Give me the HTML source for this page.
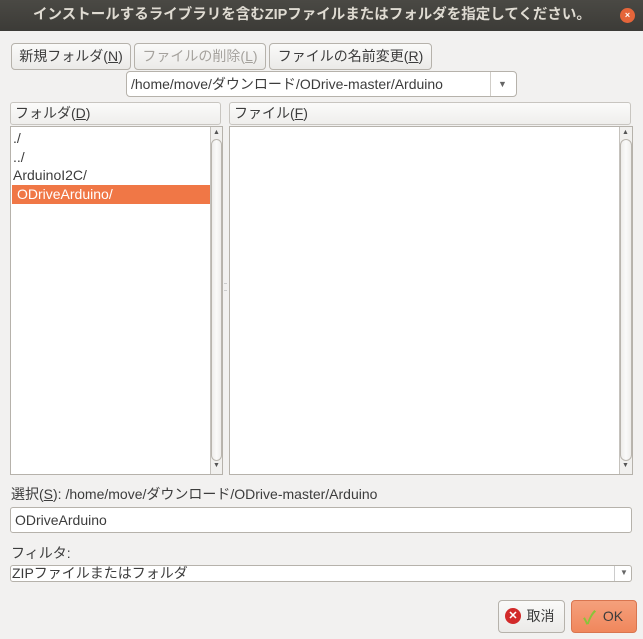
<!DOCTYPE html>
<html><head><meta charset="utf-8"><style>
*{box-sizing:border-box;margin:0;padding:0}
body{width:643px;height:639px;background:#f2f1f0;font-family:"Liberation Sans","Noto Sans CJK JP",sans-serif;font-size:14px;color:#3c3c3c;position:relative;overflow:hidden}
.a{position:absolute}
.title{left:0;top:0;width:643px;height:31px;background:linear-gradient(#4a4944,#3c3b37);color:#dfdbd2;font-weight:bold;font-size:14.5px;line-height:31px;padding-left:33px;white-space:nowrap}
.close{left:620px;top:8px;width:15px;height:15px;border-radius:50%;background:#e5653a;color:#fff;font-size:9px;line-height:15px;text-align:center;font-weight:bold}
.btn{border:1px solid #b6b2ab;border-radius:4px;background:linear-gradient(#fafaf9,#ebeae8);line-height:24px;text-align:center;white-space:nowrap;font-size:14px}
.hdr{border:1px solid #c8c5c0;border-radius:3px;background:linear-gradient(#fbfbfa,#efeeec);line-height:20px;padding-left:4px;font-size:14px}
.list{background:#fff;border:1px solid #b6b2ab}
.sb{background:#f1f0ee;border-left:1px solid #c5c2bd}
.thumb{border:1px solid #b9b5ae;border-radius:6px;background:linear-gradient(90deg,#eeedeb,#fafaf9,#eeedeb)}
.row{left:1px;height:19px;line-height:19px;padding-left:1px;white-space:nowrap}
u{text-decoration:underline}
</style></head><body>
<div class="a title">インストールするライブラリを含むZIPファイルまたはフォルダを指定してください。</div>
<div class="a close">×</div>

<div class="a btn" style="left:11px;top:43px;width:120px;height:27px">新規フォルダ(<u>N</u>)</div>
<div class="a btn" style="left:134px;top:43px;width:132px;height:27px;color:#a5a29d">ファイルの削除(<u>L</u>)</div>
<div class="a btn" style="left:269px;top:43px;width:163px;height:27px">ファイルの名前変更(<u>R</u>)</div>

<div class="a btn" style="left:126px;top:71px;width:391px;height:26px;background:#fff;text-align:left;padding-left:4px;line-height:24px">/home/move/ダウンロード/ODrive-master/Arduino</div>
<div class="a" style="left:490px;top:72px;width:1px;height:24px;background:#d0cdc8"></div>
<div class="a" style="left:498px;top:79px;font-size:9px;color:#666">▼</div>

<div class="a hdr" style="left:10px;top:102px;width:211px;height:23px">フォルダ(<u>D</u>)</div>
<div class="a hdr" style="left:229px;top:102px;width:402px;height:23px">ファイル(<u>F</u>)</div>

<div class="a list" style="left:10px;top:126px;width:213px;height:349px">
 <div class="a row" style="top:2px">./</div>
 <div class="a row" style="top:21px">../</div>
 <div class="a row" style="top:39px">ArduinoI2C/</div>
 <div class="a row" style="top:58px;width:198px;background:#f07746;color:#fff;padding-left:5px">ODriveArduino/</div>
 <div class="a sb" style="left:199px;top:0;width:12px;height:347px">
  <div class="a" style="left:2px;top:2px;font-size:7px;color:#555">▲</div>
  <div class="a thumb" style="left:0px;top:12px;width:11px;height:322px"></div>
  <div class="a" style="left:2px;top:335px;font-size:7px;color:#555">▼</div>
 </div>
</div>
<div class="a" style="left:224px;top:283px;width:3px;height:8px;border-top:1px solid #ccc;border-bottom:1px solid #ccc"></div>

<div class="a list" style="left:229px;top:126px;width:404px;height:349px">
 <div class="a sb" style="left:389px;top:0;width:13px;height:347px">
  <div class="a" style="left:2px;top:2px;font-size:7px;color:#555">▲</div>
  <div class="a thumb" style="left:0px;top:12px;width:12px;height:322px"></div>
  <div class="a" style="left:2px;top:335px;font-size:7px;color:#555">▼</div>
 </div>
</div>

<div class="a" style="left:11px;top:484px;white-space:nowrap">選択(<u>S</u>): /home/move/ダウンロード/ODrive-master/Arduino</div>
<div class="a" style="left:10px;top:507px;width:622px;height:26px;background:#fff;border:1px solid #b6b2ab;border-radius:3px;padding-left:4px;line-height:24px">ODriveArduino</div>
<div class="a" style="left:11px;top:543px">フィルタ:</div>
<div class="a" style="left:10px;top:565px;width:622px;height:17px;background:#fff;border:1px solid #b6b2ab;border-radius:3px;line-height:15px;padding-left:1px;white-space:nowrap">ZIPファイルまたはフォルダ</div>
<div class="a" style="left:614px;top:566px;width:1px;height:15px;background:#ccc"></div>
<div class="a" style="left:620px;top:568px;font-size:8px;color:#666">▼</div>

<div class="a btn" style="left:498px;top:600px;width:67px;height:33px;line-height:31px;padding-left:18px">取消</div>
<div class="a" style="left:505px;top:608px;width:16px;height:16px;border-radius:50%;background:#d22a2a;color:#fff;font-size:11px;line-height:16px;text-align:center;font-weight:bold">✕</div>
<div class="a btn" style="left:571px;top:600px;width:66px;height:33px;line-height:31px;padding-left:18px;background:linear-gradient(#f5a07c,#f0875c);border-color:#d9754f;color:#3c3c3c">OK</div>
<div class="a" style="left:583px;top:604px;font-size:18px;color:#8ac33a;font-weight:bold">✓</div>
</body></html>
